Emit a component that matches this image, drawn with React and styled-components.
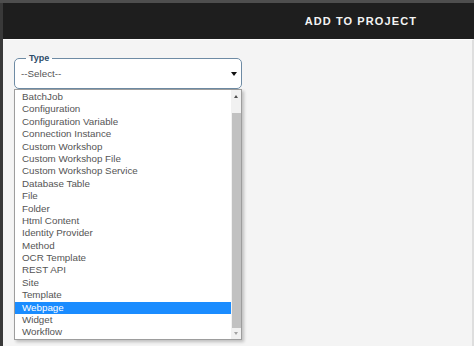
import React from 'react';
import styled, { createGlobalStyle } from 'styled-components';

const GlobalStyle = createGlobalStyle`
  html, body {
    margin: 0;
    padding: 0;
    background: #3a3a3a;
    font-family: "Liberation Sans", Arial, sans-serif;
  }
`;

const Frame = styled.div`
  width: 474px;
  height: 346px;
  box-sizing: border-box;
  display: flex;
  flex-direction: column;
  border-top: 3px solid #4e4e4e;
  padding-left: 3px;
  background: #393939;
  overflow: hidden;
`;

const Header = styled.div`
  height: 36px;
  flex: none;
  display: flex;
  align-items: center;
  justify-content: flex-end;
  padding-right: 57px;
  background: #1e1e1e;

  h1 {
    margin: 0;
    font-size: 11px;
    font-weight: 700;
    letter-spacing: 1.1px;
    color: #f4f4f4;
  }
`;

const Body = styled.div`
  flex: 1;
  background: #f4f4f4;
  border-top: 1px solid #fdfdfd;
  border-right: 2px solid #dedede;
  padding: 13px 0 0 11px;
`;

const Field = styled.fieldset`
  box-sizing: border-box;
  width: 228px;
  margin: 0;
  padding: 0 4px 4px 6px;
  border: 1px solid #6e8ba4;
  border-radius: 5px;
  background: #fff;

  legend {
    margin-left: 5px;
    padding: 0 3px;
    font-size: 9px;
    line-height: 10px;
    font-weight: 700;
    color: #2e4d6a;
  }
`;

const SelectRow = styled.div`
  height: 21px;
  display: flex;
  align-items: center;
  justify-content: space-between;
  font-size: 9.8px;
  color: #555;
`;

const Caret = styled.span`
  width: 0;
  height: 0;
  border-left: 3px solid transparent;
  border-right: 3px solid transparent;
  border-top: 4px solid #111;
  margin-top: 1px;
`;

const ListBox = styled.div`
  box-sizing: border-box;
  width: 228px;
  height: 251px;
  display: flex;
  background: #fff;
  border: 1px solid #9d9d9d;
  box-shadow: 2px 2px 3px rgba(0, 0, 0, 0.22);
`;

const Options = styled.div`
  flex: 1;
  padding-top: 1px;
  overflow: hidden;
`;

const Option = styled.div`
  height: 12.4px;
  line-height: 12.4px;
  padding-left: 7px;
  font-size: 9.8px;
  white-space: nowrap;
  color: ${(p) => (p.$active ? '#fff' : '#555')};
  background: ${(p) => (p.$active ? '#1a8cff' : 'transparent')};
`;

const Scrollbar = styled.div`
  width: 10px;
  flex: none;
  display: flex;
  flex-direction: column;
  background: #f1f1f1;
`;

const ArrowButton = styled.div`
  height: ${(p) => p.$h}px;
  flex: none;
  display: flex;
  align-items: center;
  justify-content: center;

  &::after {
    content: '';
    width: 0;
    height: 0;
    border-left: 2.5px solid transparent;
    border-right: 2.5px solid transparent;
    ${(p) =>
      p.$down
        ? 'border-top: 3px solid #a3a3a3;'
        : 'border-bottom: 3px solid #505050;'}
  }
`;

const Track = styled.div`
  flex: 1;
  display: flex;
  padding: 10px 0 0 1px;
`;

const Thumb = styled.div`
  flex: 1;
  background: #c1c1c1;
`;

const types = [
  'BatchJob',
  'Configuration',
  'Configuration Variable',
  'Connection Instance',
  'Custom Workshop',
  'Custom Workshop File',
  'Custom Workshop Service',
  'Database Table',
  'File',
  'Folder',
  'Html Content',
  'Identity Provider',
  'Method',
  'OCR Template',
  'REST API',
  'Site',
  'Template',
  'Webpage',
  'Widget',
  'Workflow',
];

const App = () => (
  <>
    <GlobalStyle />
    <Frame>
      <Header>
        <h1>ADD TO PROJECT</h1>
      </Header>
      <Body>
        <Field>
          <legend>Type</legend>
          <SelectRow>
            <span>--Select--</span>
            <Caret />
          </SelectRow>
        </Field>
        <ListBox>
          <Options>
            {types.map((t) => (
              <Option key={t} $active={t === 'Webpage'}>
                {t}
              </Option>
            ))}
          </Options>
          <Scrollbar>
            <ArrowButton $h={13} />
            <Track>
              <Thumb />
            </Track>
            <ArrowButton $h={11} $down />
          </Scrollbar>
        </ListBox>
      </Body>
    </Frame>
  </>
);

export default App;
